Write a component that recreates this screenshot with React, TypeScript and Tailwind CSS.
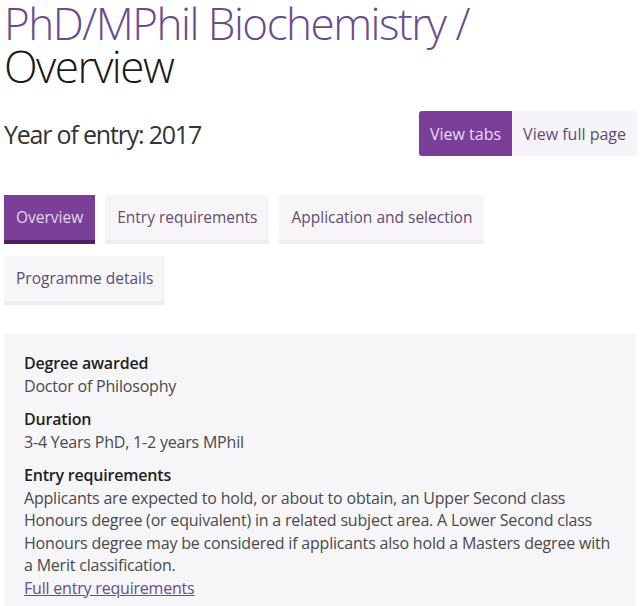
const tabs = ["Overview", "Entry requirements", "Application and selection", "Programme details"];

export default function App() {
  return (
    <div className="min-h-[606px] bg-white pl-[4px] pr-[3px] font-['Open_Sans',sans-serif] text-[#333]">
      <h1 className="pt-[2px] text-[44px] font-light leading-[43px] tracking-[-1.5px]">
        <span className="text-[#6a4b8e]">PhD/MPhil Biochemistry / </span>
        <span className="text-[#1a1a1a]">Overview</span>
      </h1>

      <div className="mt-[23px] flex items-center justify-between">
        <p className="text-[25px] leading-[32px] tracking-[-1.2px] text-[#333]">Year of entry: 2017</p>
        <div className="flex">
          <button className="h-[45px] rounded-l-[3px] bg-[#7a3f98] px-[11px] text-[16px] text-[#eadcf2]">View tabs</button>
          <button className="h-[45px] bg-[#f6f4f8] px-[11px] text-[16px] text-[#5d4e70]">View full page</button>
        </div>
      </div>

      <nav className="mt-[39px] flex flex-wrap gap-x-[10px] gap-y-[12px]">
        {tabs.map((t, i) =>
          i === 0 ? (
            <a key={t} className="flex h-[49px] items-center border-b-[4px] border-[#4e1f68] bg-[#7a3f98] px-[12px] text-[15.5px] text-[#e7d5f1]">
              {t}
            </a>
          ) : (
            <a key={t} className="flex h-[49px] items-center border-b-[4px] border-[#efedf1] bg-[#f7f5f8] px-[12px] text-[15.5px] text-[#5d4e70]">
              {t}
            </a>
          )
        )}
      </nav>

      <section className="mt-[29px] mr-[1px] bg-[#f6f5f8] px-[20px] pt-[18px] pb-[20px] text-[16px] leading-[22.5px] tracking-[-0.2px]">
        <dl>
          <dt className="font-semibold text-[#1f1f1f]">Degree awarded</dt>
          <dd className="text-[#4a4a4a]">Doctor of Philosophy</dd>
          <dt className="mt-[11px] font-semibold text-[#1f1f1f]">Duration</dt>
          <dd className="text-[#4a4a4a]">3-4 Years PhD, 1-2 years MPhil</dd>
          <dt className="mt-[11px] font-semibold text-[#1f1f1f]">Entry requirements</dt>
          <dd className="text-[#4a4a4a]">
            Applicants are expected to hold, or about to obtain, an Upper Second class Honours degree (or equivalent) in a related subject area. A Lower Second class Honours degree may be considered if applicants also hold a Masters degree with a Merit classification.
            <br />
            <a href="#" className="text-[#6a4b8e] underline">Full entry requirements</a>
          </dd>
        </dl>
      </section>
    </div>
  );
}
